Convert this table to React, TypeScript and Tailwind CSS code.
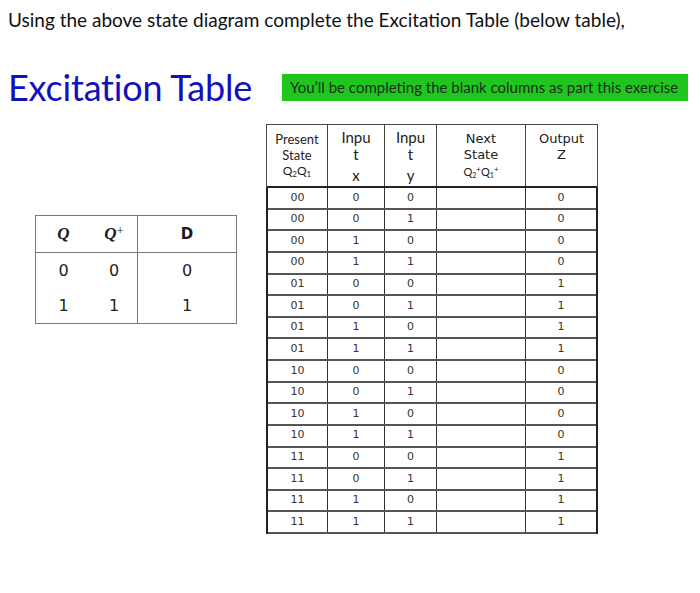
import React from "react";

const rows: [string, string, string, string][] = [
  ["00", "0", "0", "0"],
  ["00", "0", "1", "0"],
  ["00", "1", "0", "0"],
  ["00", "1", "1", "0"],
  ["01", "0", "0", "1"],
  ["01", "0", "1", "1"],
  ["01", "1", "0", "1"],
  ["01", "1", "1", "1"],
  ["10", "0", "0", "0"],
  ["10", "0", "1", "0"],
  ["10", "1", "0", "0"],
  ["10", "1", "1", "0"],
  ["11", "0", "0", "1"],
  ["11", "0", "1", "1"],
  ["11", "1", "0", "1"],
  ["11", "1", "1", "1"],
];

const cal = { fontFamily: "Lato, 'Open Sans', sans-serif" };
const ver = { fontFamily: "'DejaVu Sans', Verdana, sans-serif" };

export default function App() {
  return (
    <div className="w-[700px] h-[593px] bg-white overflow-hidden text-[#1a1a1a]">
      <div className="pl-[8px] pt-[8px] text-[19px] leading-[24px] text-[#111] whitespace-nowrap" style={cal}>
        Using the above state diagram complete the Excitation Table (below table),
      </div>
      <div className="flex items-center mt-[32px]">
        <div
          className="pl-[8px] text-[36px] leading-[46px] tracking-[-0.2px] text-[#1111bb] w-[282px] whitespace-nowrap"
          style={cal}
        >
          Excitation Table
        </div>
        <div
          className="w-[406px] h-[27px] bg-[#1ec61e] flex items-center pl-[8px] text-[15px] text-[#1c2e1c] whitespace-nowrap"
          style={cal}
        >
          You’ll be completing the blank columns as part this exercise
        </div>
      </div>
      <div className="flex items-start mt-[14px]">
        {/* small table */}
        <div className="ml-[35px] mt-[91px] w-[202px] border border-[#777]">
          <div className="flex h-[37px] border-b border-[#777]">
            <div
              className="w-[55px] flex items-center justify-center text-[17px] font-bold italic"
              style={{ fontFamily: "'Liberation Serif', serif" }}
            >
              Q
            </div>
            <div
              className="w-[46px] flex items-center justify-center text-[17px] font-bold italic"
              style={{ fontFamily: "'Liberation Serif', serif" }}
            >
              Q<sup className="text-[13px] font-normal not-italic relative -top-[3px]">+</sup>
            </div>
            <div className="flex-1 border-l border-[#777] flex items-center justify-center text-[15px] font-bold" style={ver}>
              D
            </div>
          </div>
          {[
            ["0", "0", "0"],
            ["1", "1", "1"],
          ].map((r, i) => (
            <div key={i} className="flex h-[35px] text-[16px] text-[#222]" style={ver}>
              <div className="w-[55px] flex items-center justify-center">{r[0]}</div>
              <div className="w-[46px] flex items-center justify-center">{r[1]}</div>
              <div className="flex-1 border-l border-[#777] flex items-center justify-center">{r[2]}</div>
            </div>
          ))}
        </div>
        {/* main table */}
        <div className="ml-[29px] w-[332px] border-t border-r border-l border-[#444]">
          <div className="flex h-[63px] border-b-2 border-[#222] text-[#222]">
            <div className="w-[60px] flex flex-col items-center pt-[6px] text-[13px] leading-[16px]" style={cal}>
              <div>Present</div>
              <div>State</div>
              <div className="text-[12px]">
                Q<sub className="text-[8px]">2</sub>Q<sub className="text-[8px]">1</sub>
              </div>
            </div>
            <div className="w-[57px] border-l border-[#444] flex flex-col items-center pt-[4px] text-[15px] leading-[17px]" style={cal}>
              <div>Inpu</div>
              <div>t</div>
              <div className="mt-[4px]">x</div>
            </div>
            <div className="w-[52px] border-l border-[#444] flex flex-col items-center pt-[4px] text-[15px] leading-[17px]" style={cal}>
              <div>Inpu</div>
              <div>t</div>
              <div className="mt-[4px]">y</div>
            </div>
            <div className="w-[89px] border-l border-[#444] flex flex-col items-center pt-[6px] text-[13px] leading-[16px]" style={ver}>
              <div>Next</div>
              <div>State</div>
              <div className="text-[11px] mt-[1px]" style={cal}>
                Q<sub className="text-[7px]">2</sub>
                <sup className="text-[8px]">+</sup>Q<sub className="text-[7px]">1</sub>
                <sup className="text-[8px]">+</sup>
              </div>
            </div>
            <div className="flex-1 border-l border-[#444] flex flex-col items-center pt-[6px] text-[13px] leading-[16px]" style={ver}>
              <div>Output</div>
              <div>Z</div>
            </div>
          </div>
          <div className="border-l-2 border-r-2 border-[#222] -mx-[1px]">
            {rows.map((r, i) => (
              <div
                key={i}
                className="flex h-[21.625px] border-b-2 border-[#555] text-[11px] text-[#333]"
                style={ver}
              >
                <div className="w-[59px] flex items-center justify-center">{r[0]}</div>
                <div className="w-[57px] border-l border-[#333] flex items-center justify-center">{r[1]}</div>
                <div className="w-[52px] border-l border-[#333] flex items-center justify-center">{r[2]}</div>
                <div className="w-[89px] border-l border-[#333]"></div>
                <div className="flex-1 border-l border-[#333] flex items-center justify-center">{r[3]}</div>
              </div>
            ))}
          </div>
        </div>
      </div>
    </div>
  );
}
